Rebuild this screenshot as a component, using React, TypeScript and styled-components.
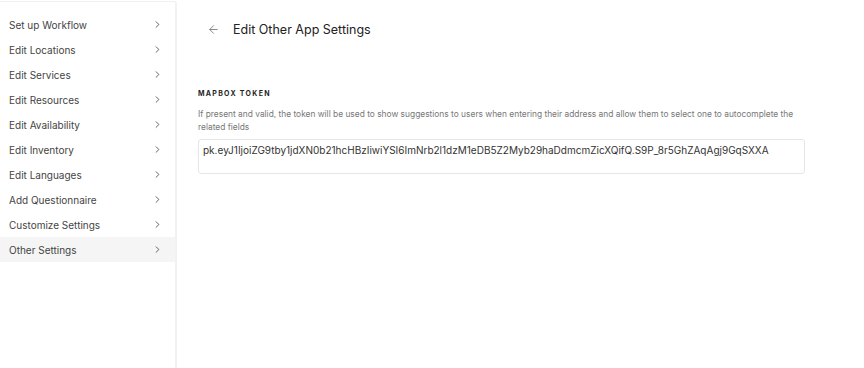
import React from "react";
import styled, { createGlobalStyle } from "styled-components";
import { ChevronRight, ArrowLeft } from "lucide-react";

const GlobalStyle = createGlobalStyle`
  html, body {
    margin: 0;
    padding: 0;
    background: #ffffff;
    font-family: Inter, "Noto Sans", sans-serif;
  }
`;

const Page = styled.div`
  display: flex;
  height: 368px;
  width: 864px;
  overflow: hidden;
`;

const Sidebar = styled.nav`
  width: 177px;
  flex-shrink: 0;
  margin-top: 1px;
  border-top: 1px solid #f0f0f0;
  border-right: 2px solid #f2f2f2;
  border-top-right-radius: 3px;
  padding-top: 10px;
  box-sizing: border-box;
`;

const NavItem = styled.div<{ $active?: boolean }>`
  display: flex;
  align-items: center;
  justify-content: space-between;
  height: 25px;
  padding: 0 12px 0 9px;
  font-size: 10px;
  color: #444444;
  background: ${(p) => (p.$active ? "#f5f5f5" : "transparent")};
`;

const Main = styled.main`
  flex: 1;
  padding: 16px 0 0 21px;
`;

const Header = styled.div`
  display: flex;
  align-items: center;
  gap: 13px;
  height: 26px;
  padding-left: 9px;
`;

const Title = styled.h1`
  margin: 0;
  font-size: 12.5px;
  font-weight: 400;
  color: #222222;
`;

const Section = styled.section`
  margin-top: 47px;
  width: 607px;
`;

const Label = styled.div`
  font-size: 7px;
  font-weight: 700;
  letter-spacing: 1.3px;
  color: #1f1f1f;
  text-transform: uppercase;
`;

const Help = styled.p`
  margin: 10px 0 0;
  font-size: 8.4px;
  line-height: 13px;
  color: #777777;
`;

const TokenBox = styled.div`
  margin-top: 5px;
  height: 35px;
  box-sizing: border-box;
  border: 1px solid #e6e6e6;
  border-radius: 3px;
  padding: 3px 4px;
  font-size: 10px;
  line-height: 14px;
  color: #333333;
`;

const items = [
  "Set up Workflow",
  "Edit Locations",
  "Edit Services",
  "Edit Resources",
  "Edit Availability",
  "Edit Inventory",
  "Edit Languages",
  "Add Questionnaire",
  "Customize Settings",
  "Other Settings",
];

export default function App() {
  return (
    <>
      <GlobalStyle />
      <Page>
        <Sidebar>
          {items.map((label) => (
            <NavItem key={label} $active={label === "Other Settings"}>
              <span>{label}</span>
              <ChevronRight size={11} strokeWidth={1.8} color="#444" />
            </NavItem>
          ))}
        </Sidebar>
        <Main>
          <Header>
            <ArrowLeft size={13} strokeWidth={1.6} color="#777" />
            <Title>Edit Other App Settings</Title>
          </Header>
          <Section>
            <Label>Mapbox Token</Label>
            <Help>
              If present and valid, the token will be used to show suggestions to users when entering their address and allow them to select one to autocomplete the related fields
            </Help>
            <TokenBox>pk.eyJ1IjoiZG9tby1jdXN0b21hcHBzIiwiYSI6ImNrb2l1dzM1eDB5Z2Myb29haDdmcmZicXQifQ.S9P_8r5GhZAqAgj9GqSXXA</TokenBox>
          </Section>
        </Main>
      </Page>
    </>
  );
}
